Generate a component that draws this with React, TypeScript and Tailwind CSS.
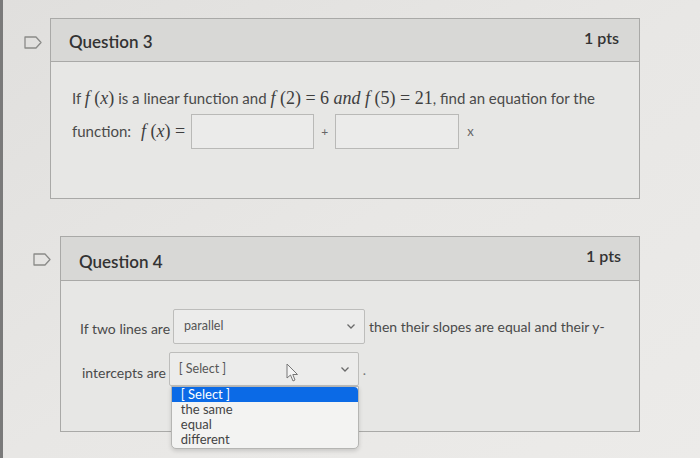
import React from "react";

const sans = { fontFamily: "Lato, 'Open Sans', sans-serif" };

function Flag() {
  return (
    <svg width="18" height="13" viewBox="0 0 18 13" className="shrink-0">
      <path d="M1 1 H12 L17 6.5 L12 12 H1 Z" fill="none" stroke="#8a8a88" strokeWidth="1.3" strokeLinejoin="round" />
    </svg>
  );
}

function M({ children }: { children: React.ReactNode }) {
  return <span className="font-['Liberation_Serif',serif] text-[18px] text-[#3e3e3e]">{children}</span>;
}
function I({ children }: { children: React.ReactNode }) {
  return <span className="italic">{children}</span>;
}

function Chevron() {
  return (
    <svg width="10" height="7" viewBox="0 0 10 7">
      <path d="M1.5 1.5 L5 5 L8.5 1.5" fill="none" stroke="#6a6a6a" strokeWidth="1.3" />
    </svg>
  );
}

export default function App() {
  return (
    <div
      className="relative w-[700px] h-[458px] overflow-hidden bg-gradient-to-br from-[#e0dfdd] via-[#e8e7e5] to-[#ecebe9] border-l-[3px] border-[#7a7a7a] text-[#4a4a4a]"
      style={sans}
    >
      {/* Question 3 */}
      <div className="flex items-start pt-[18px] pl-[21px]">
        <div className="pt-[18px] w-[26px]">
          <Flag />
        </div>
        <div className="w-[590px] border border-[#a9a9a7]">
          <div className="h-[43px] bg-[#d8d8d6] border-b border-[#a9a9a7] flex items-center justify-between pl-[18px] pr-[20px]">
            <span className="text-[17px] font-semibold text-[#333] mt-[4px]">Question 3</span>
            <span className="text-[16px] font-semibold text-[#333] -mt-[4px]">1 pts</span>
          </div>
          <div className="h-[136px] bg-[#e7e7e5] pl-[21px] pt-[24px]">
            <div className="text-[15px] leading-[24px] whitespace-nowrap">
              If <M><I>f</I> (<I>x</I>)</M> is a linear function and{" "}
              <M>
                <I>f</I> (2) = 6 <I>and</I> <I>f</I> (5) = 21
              </M>
              , find an equation for the
            </div>
            <div className="flex items-center mt-[4px] text-[15px]">
              <span>function:</span>
              <span className="ml-[10px] mr-[6px]">
                <M><I>f</I> (<I>x</I>) =</M>
              </span>
              <div className="w-[123px] h-[35px] border border-[#b9b9b7] bg-[#ebebea]" />
              <span className="text-[12px] mx-[7px] text-[#666]">+</span>
              <div className="w-[124px] h-[35px] border border-[#b9b9b7] bg-[#ebebea]" />
              <span className="text-[13px] ml-[8px] text-[#666]">x</span>
            </div>
          </div>
        </div>
      </div>

      {/* Question 4 */}
      <div className="flex items-start pt-[37px] pl-[30px]">
        <div className="pt-[17px] w-[27px]">
          <Flag />
        </div>
        <div className="w-[580px] border border-[#a9a9a7]">
          <div className="h-[44px] bg-[#d8d8d6] border-b border-[#a9a9a7] flex items-center justify-between pl-[18px] pr-[18px]">
            <span className="text-[17px] font-semibold text-[#333] mt-[6px]">Question 4</span>
            <span className="text-[16px] font-semibold text-[#333] -mt-[6px]">1 pts</span>
          </div>
          <div className="h-[150px] bg-[#e7e7e5] pl-[19px] pt-[28px] text-[14px]">
            <div className="flex items-center whitespace-nowrap">
              <span className="mt-[4px]">If two lines are</span>
              <div className="ml-[3px] w-[192px] h-[35px] border border-[#bdbdbb] bg-[#ececeb] rounded-[2px] flex items-center justify-between pl-[10px] pr-[8px]">
                <span className="text-[12.5px] text-[#555]">parallel</span>
                <Chevron />
              </div>
              <span className="ml-[4px]">then their slopes are equal and their y-</span>
            </div>
            <div className="flex items-center whitespace-nowrap mt-[8px]">
              <span className="ml-[2px] mt-[6px]">intercepts are</span>
              <div className="relative ml-[3px] w-[190px] h-[34px] border border-[#bdbdbb] bg-[#ececeb] rounded-[2px] flex items-center justify-between pl-[9px] pr-[8px]">
                <span className="text-[12.5px] text-[#555]">[ Select ]</span>
                <Chevron />
                <svg width="14" height="20" viewBox="0 0 14 20" className="absolute left-[116px] top-[10px]">
                  <path d="M1 1 L1 15 L4.5 12 L7 18 L9 17 L6.8 11.5 L11.5 11.5 Z" fill="#f4f4f4" stroke="#777" strokeWidth="1" strokeLinejoin="round" />
                </svg>
                <div className="absolute left-[1px] top-[33px] w-[188px] bg-[#f3f3f2] border border-[#b5b5b3] rounded-b-[5px] shadow-[0_2px_4px_rgba(0,0,0,0.15)] text-[13px] leading-[15px] text-[#444] pb-[1px] z-10">
                  <div className="bg-[#0b6ae6] text-white pl-[9px] rounded-tr-[4px]">[ Select ]</div>
                  <div className="pl-[9px]">the same</div>
                  <div className="pl-[9px]">equal</div>
                  <div className="pl-[9px]">different</div>
                </div>
              </div>
              <span className="ml-[4px] text-[#777]">.</span>
            </div>
          </div>
        </div>
      </div>
    </div>
  );
}
